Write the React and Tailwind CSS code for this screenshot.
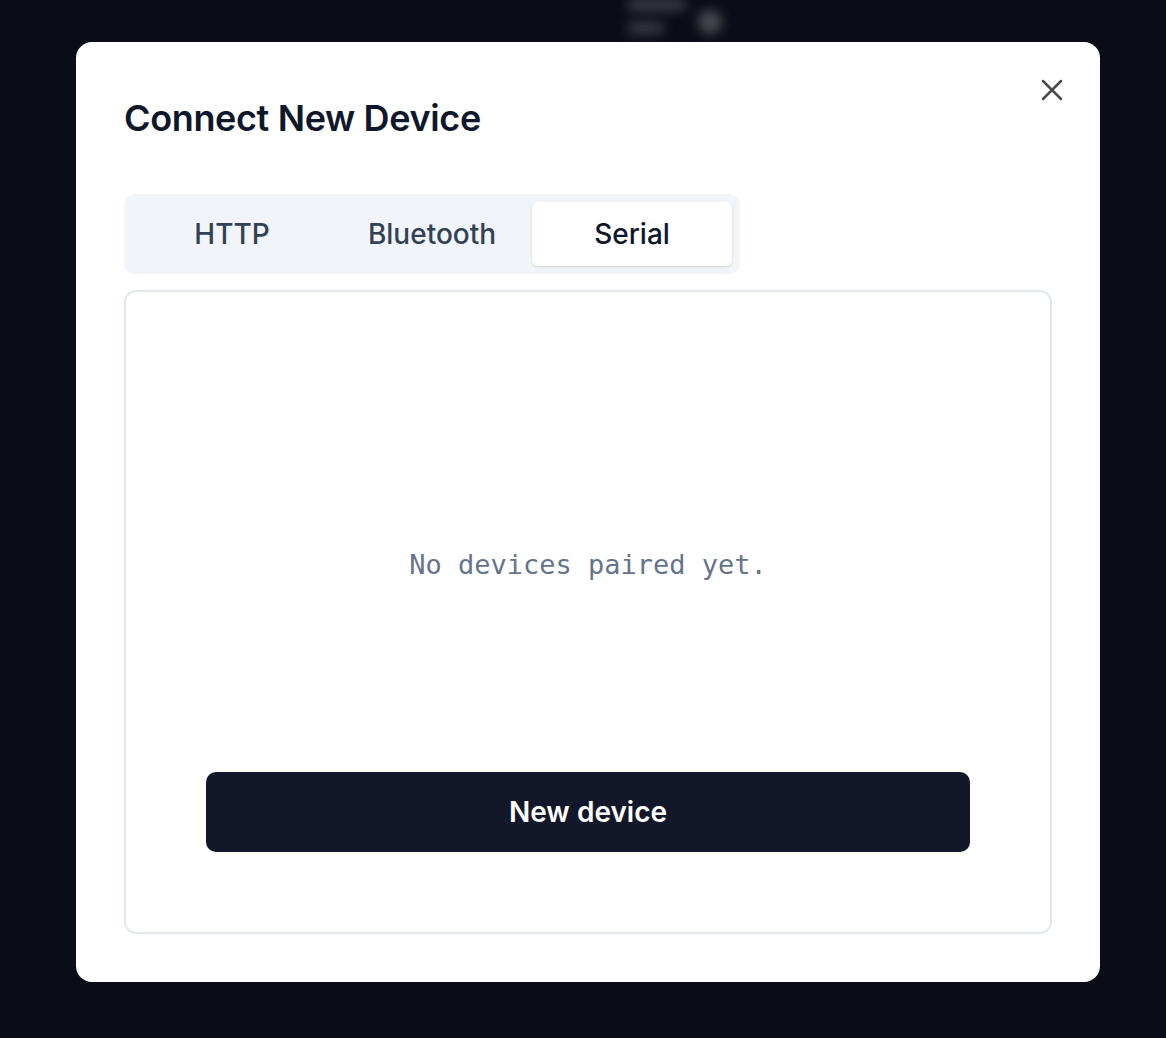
const XIcon = () => (
  <svg width="36" height="36" viewBox="0 0 24 24" fill="none" stroke="#4b4b4f" strokeWidth="1.7" strokeLinecap="round">
    <path d="M18 6 6 18" />
    <path d="m6 6 12 12" />
  </svg>
);

const tabs = ["HTTP", "Bluetooth", "Serial"];

export default function App() {
  const active = "Serial";

  return (
    <div className="relative h-[1038px] w-full overflow-hidden bg-[#0a0d17] font-['Inter',sans-serif]">
      {/* blurred page behind the modal */}
      <div className="absolute left-[628px] top-0 flex items-end gap-3 blur-[6px]">
        <div className="flex flex-col gap-3">
          <div className="h-[10px] w-[58px] rounded bg-[#44454c]" />
          <div className="h-[12px] w-[36px] rounded bg-[#3a3b42]" />
        </div>
        <div className="h-[24px] w-[24px] rounded-full bg-[#4a4b50]" />
      </div>

      <div className="relative ml-[76px] mt-[42px] flex h-[940px] w-[1024px] flex-col rounded-2xl bg-white px-12 pb-12 pt-[56px]">
        <button className="absolute right-[30px] top-[30px]">
          <XIcon />
        </button>

        <h2 className="text-[36px] font-semibold leading-10 tracking-[-0.01em] text-[#0f172a]">
          Connect New Device
        </h2>

        <div className="mt-[56px] flex w-[616px] rounded-[10px] bg-[#f1f5f9] p-2">
          {tabs.map((t) => (
            <div
              key={t}
              className={
                t === active
                  ? "flex h-16 w-[200px] items-center justify-center rounded-md bg-white text-[28px] font-medium text-[#0f172a] shadow-sm"
                  : "flex h-16 w-[200px] items-center justify-center text-[28px] font-medium text-[#334155]"
              }
            >
              {t}
            </div>
          ))}
        </div>

        <div className="mt-4 flex flex-1 flex-col rounded-xl border-2 border-[#e2e8f0] px-[80px] pb-[80px] pt-[66px]">
          <div className="flex flex-1 items-center justify-center">
            <p className="font-['DejaVu_Sans_Mono',monospace] text-[27px] text-[#64748b]">
              No devices paired yet.
            </p>
          </div>
          <button className="h-20 w-full rounded-[10px] bg-[#121829] text-[28px] font-semibold text-white">
            New device
          </button>
        </div>
      </div>
    </div>
  );
}
